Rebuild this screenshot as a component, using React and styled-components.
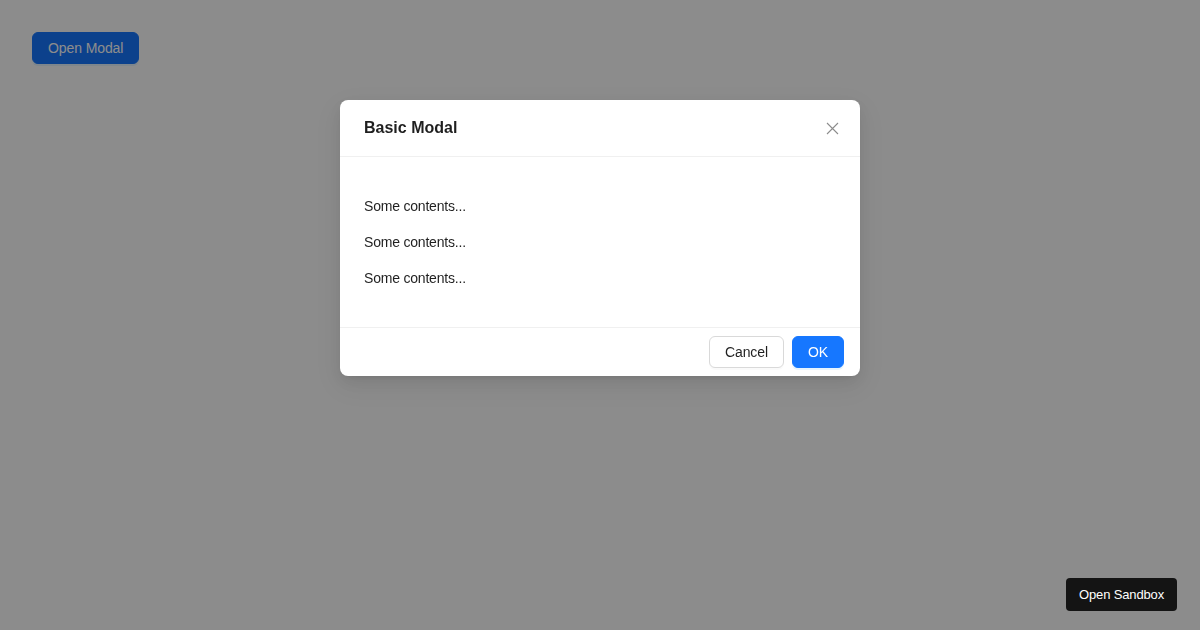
import styled, { createGlobalStyle } from 'styled-components';

const GlobalStyle = createGlobalStyle`
  html, body {
    margin: 0;
    padding: 0;
    background: #ffffff;
    font-family: "Liberation Sans", Arial, sans-serif;
    font-size: 14px;
    color: rgba(0, 0, 0, 0.88);
  }
`;

const Page = styled.div`
  padding: 32px;
  height: 630px;
  box-sizing: border-box;
`;

const Button = styled.button`
  height: 32px;
  padding: 0 15px;
  border-radius: 6px;
  font-family: inherit;
  font-size: 14px;
  line-height: 22px;
  letter-spacing: -0.1px;
  cursor: pointer;
  border: 1px solid ${(p) => (p.$primary ? '#1677ff' : '#d9d9d9')};
  background: ${(p) => (p.$primary ? '#1677ff' : '#ffffff')};
  color: ${(p) => (p.$primary ? '#ffffff' : 'rgba(0, 0, 0, 0.88)')};
  box-shadow: ${(p) =>
    p.$primary ? '0 2px 0 rgba(5, 145, 255, 0.1)' : '0 2px 0 rgba(0, 0, 0, 0.02)'};
`;

// 마스크 + 가운데 정렬 모달 래퍼
const Mask = styled.div`
  position: fixed;
  inset: 0;
  background: rgba(0, 0, 0, 0.45);
  display: flex;
  justify-content: center;
  align-items: flex-start;
  padding-top: 100px;
`;

const Dialog = styled.div`
  width: 520px;
  background: #ffffff;
  border-radius: 8px;
  box-shadow: 0 6px 16px 0 rgba(0, 0, 0, 0.08), 0 3px 6px -4px rgba(0, 0, 0, 0.12),
    0 9px 28px 8px rgba(0, 0, 0, 0.05);
  overflow: hidden;
`;

const Header = styled.div`
  height: 56px;
  padding: 0 24px;
  display: flex;
  align-items: center;
  justify-content: space-between;
  border-bottom: 1px solid #f0f0f0;

  .title {
    font-size: 16px;
    font-weight: 700;
    line-height: 22px;
    color: rgba(0, 0, 0, 0.88);
  }
`;

const Close = styled.button`
  width: 22px;
  height: 22px;
  margin-right: -7px;
  border: 0;
  padding: 0;
  background: transparent;
  display: flex;
  align-items: center;
  justify-content: center;
  color: rgba(0, 0, 0, 0.45);
  cursor: pointer;
`;

const Body = styled.div`
  padding: 24px;

  p {
    margin: 14px 0;
    line-height: 22px;
    letter-spacing: -0.2px;
  }
`;

const Footer = styled.div`
  padding: 8px 16px;
  display: flex;
  justify-content: flex-end;
  gap: 8px;
  border-top: 1px solid #f0f0f0;
`;

const Sandbox = styled.button`
  position: fixed;
  right: 23px;
  bottom: 19px;
  height: 33px;
  padding: 0 13px;
  border: 0;
  border-radius: 4px;
  background: #141414;
  color: #ffffff;
  font-family: inherit;
  font-size: 13px;
  letter-spacing: -0.15px;
`;

function CloseIcon() {
  return (
    <svg width="13" height="13" viewBox="0 0 13 13" fill="none">
      <path d="M1 1l11 11M12 1L1 12" stroke="currentColor" strokeWidth="1.1" />
    </svg>
  );
}

export default function App() {
  return (
    <>
      <GlobalStyle />
      <Page>
        <Button $primary>Open Modal</Button>
      </Page>
      <Mask>
        <Dialog>
          <Header>
            <div className="title">Basic Modal</div>
            <Close aria-label="Close">
              <CloseIcon />
            </Close>
          </Header>
          <Body>
            <p>Some contents...</p>
            <p>Some contents...</p>
            <p>Some contents...</p>
          </Body>
          <Footer>
            <Button>Cancel</Button>
            <Button $primary>OK</Button>
          </Footer>
        </Dialog>
      </Mask>
      <Sandbox>Open Sandbox</Sandbox>
    </>
  );
}
